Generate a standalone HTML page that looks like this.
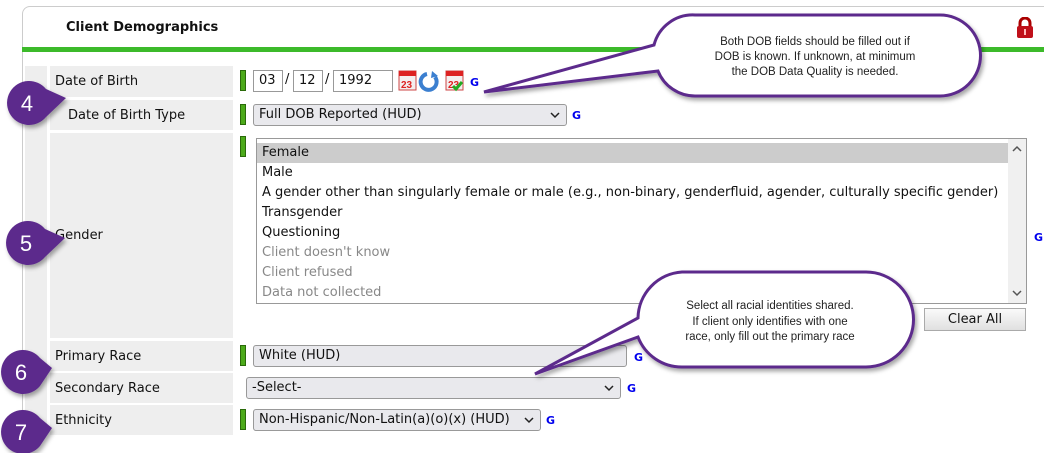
<!DOCTYPE html>
<html style="overflow:hidden;height:453px"><head><style>
*{box-sizing:border-box}
body{margin:0;width:1044px;height:453px;background:#fff;font-family:"DejaVu Sans",Verdana,sans-serif;font-size:13px;color:#111;position:relative;overflow:hidden}
.abs{position:absolute}
.panel{left:22px;top:6px;width:1022px;height:447px;border:1px solid #ccc;border-radius:8px 0 0 0;border-right:none;border-bottom:none}
.green{left:22px;top:47px;width:1022px;height:5px;background:#3cba2a}
.hdr{left:66px;top:20px;font-weight:bold;font-size:13px}
.gc{background:#eee}
.lab{display:flex;align-items:center;padding-left:5px}
.bar{width:6px;height:21px;background:#4caa1a;border:1px solid #2a6a0a}
.inp{height:22px;border:1px solid #999;background:#fff;padding:2px 5px;font-size:13px}
.sel{height:22px;border:1px solid #999;border-radius:3px;background:#e9e9ed;padding:2px 5px;font-size:13px}
.ch{position:absolute;right:6px;top:7px;width:10px;height:7px}
.g{color:#0000ee;font-weight:bold;font-size:11px}
.list div{height:20px;line-height:20px;padding-left:5px;white-space:nowrap}
</style></head><body>
<div class="abs panel"></div>
<div class="abs green"></div>
<div class="abs hdr">Client Demographics</div>
<svg class="abs" style="left:1016px;top:17px" width="18" height="22" viewBox="0 0 18 22"><path d="M4 10V6a5 5 0 0 1 10 0v4" fill="none" stroke="#a00" stroke-width="3"/><rect x="1" y="9" width="16" height="12" rx="2" fill="#c0101a"/><rect x="8" y="12" width="2" height="6" fill="#fbb"/></svg>

<div class="abs gc" style="left:25px;top:66px;width:22px;height:369px"></div>
<div class="abs" style="left:47px;top:66px;width:3px;height:369px;background:#fff"></div>
<div class="abs gc lab" style="left:50px;top:66px;width:183px;height:31px">Date of Birth</div>
<div class="abs gc lab" style="left:50px;top:100px;width:183px;height:30px;padding-left:18px">Date of Birth Type</div>
<div class="abs gc lab" style="left:50px;top:133px;width:183px;height:205px">Gender</div>
<div class="abs gc lab" style="left:50px;top:341px;width:183px;height:30px">Primary Race</div>
<div class="abs gc lab" style="left:50px;top:373px;width:183px;height:30px">Secondary Race</div>
<div class="abs gc lab" style="left:50px;top:405px;width:183px;height:30px">Ethnicity</div>
<div class="abs" style="left:25px;top:97px;width:208px;height:3px;background:#fff"></div>

<div class="abs bar" style="left:240px;top:70px"></div>
<div class="abs inp" style="left:253px;top:70px;width:30px">03</div>
<div class="abs" style="left:285px;top:72px">/</div>
<div class="abs inp" style="left:293px;top:70px;width:30px">12</div>
<div class="abs" style="left:325px;top:72px">/</div>
<div class="abs inp" style="left:333px;top:70px;width:60px">1992</div>
<svg class="abs" style="left:397px;top:68px" width="72" height="26">
<rect x="2" y="3" width="17" height="19" fill="#f4eeee" stroke="#c44"/><rect x="2" y="3" width="17" height="5" fill="#d22"/><text x="4" y="20" font-size="10" font-weight="bold" fill="#d22" font-family="Liberation Sans">23</text>
<path d="M30 6a8 8 0 1 0 8 3" fill="none" stroke="#3b7fd0" stroke-width="4"/><path d="M35 3l6 5-7 2z" fill="#3b7fd0"/>
<rect x="49" y="3" width="17" height="19" fill="#f4eeee" stroke="#c44"/><rect x="49" y="3" width="17" height="5" fill="#d22"/><text x="51" y="20" font-size="10" font-weight="bold" fill="#d22" font-family="Liberation Sans">23</text><path d="M56 18l3 3 6-7" fill="none" stroke="#2a2" stroke-width="3"/>
</svg>
<div class="abs g" style="left:470px;top:76px">G</div>

<div class="abs bar" style="left:240px;top:104px"></div>
<div class="abs sel" style="left:253px;top:104px;width:314px">Full DOB Reported (HUD)<svg class="ch" viewBox="0 0 10 7"><path d="M1 1l4 4 4-4" fill="none" stroke="#222" stroke-width="1.5"/></svg></div>
<div class="abs g" style="left:572px;top:109px">G</div>

<div class="abs bar" style="left:240px;top:136px"></div>
<div class="abs list" style="left:256px;top:138px;width:771px;height:166px;border:1px solid #999;background:#fff;padding-top:4px">
<div style="background:#ccc;margin-right:18px">Female</div><div>Male</div>
<div>A gender other than singularly female or male (e.g., non-binary, genderfluid, agender, culturally specific gender)</div>
<div>Transgender</div><div>Questioning</div>
<div style="color:#888">Client doesn't know</div><div style="color:#888">Client refused</div><div style="color:#888">Data not collected</div>
</div>
<div class="abs" style="left:1008px;top:139px;width:18px;height:164px;background:#f0f0f0">
<svg class="abs" style="left:4px;top:6px" width="10" height="7"><path d="M1 6l4-4 4 4" fill="none" stroke="#555" stroke-width="1.5"/></svg>
<svg class="abs" style="left:4px;top:151px" width="10" height="7"><path d="M1 1l4 4 4-4" fill="none" stroke="#555" stroke-width="1.5"/></svg></div>
<div class="abs g" style="left:1034px;top:231px">G</div>
<div class="abs" style="left:924px;top:308px;width:102px;height:23px;border:1px solid #aaa;background:linear-gradient(#fafafa,#e0e0e0);text-align:center;line-height:21px;font-size:13px">Clear All</div>

<div class="abs bar" style="left:240px;top:345px"></div>
<div class="abs sel" style="left:253px;top:345px;width:374px">White (HUD)</div>
<div class="abs g" style="left:634px;top:351px">G</div>
<div class="abs sel" style="left:246px;top:377px;width:375px">-Select-<svg class="ch" viewBox="0 0 10 7"><path d="M1 1l4 4 4-4" fill="none" stroke="#222" stroke-width="1.5"/></svg></div>
<div class="abs g" style="left:627px;top:382px">G</div>
<div class="abs bar" style="left:240px;top:409px"></div>
<div class="abs sel" style="left:253px;top:409px;width:288px">Non-Hispanic/Non-Latin(a)(o)(x) (HUD)<svg class="ch" viewBox="0 0 10 7"><path d="M1 1l4 4 4-4" fill="none" stroke="#222" stroke-width="1.5"/></svg></div>
<div class="abs g" style="left:546px;top:414px">G</div>

<svg class="abs" style="left:0;top:0" width="1044" height="453">
<defs><filter id="s"><feDropShadow dx="2" dy="3" stdDeviation="2" flood-opacity="0.35"/></filter></defs>
<g filter="url(#s)" fill="#fff" stroke="#5c2a8c" stroke-width="3">
<path d="M695 15H940a40 40 0 0 1 0 81H695a40 40 0 0 1-37-25L484 92L654 45a40 40 0 0 1 41-30z"/>
<path d="M682 272H866a47 47 0 0 1 0 95H682a47 47 0 0 1-44-30L535 374L638 318a47 47 0 0 1 44-46z"/>
</g>
<g font-family="Liberation Sans,Arial,sans-serif" font-size="11.5" fill="#222" text-anchor="middle">
<text x="815" y="45">Both DOB fields should be filled out if</text>
<text x="815" y="60">DOB is known.  If unknown, at minimum</text>
<text x="815" y="75">the DOB Data Quality is needed.</text>
<text x="770" y="309">Select all racial identities shared.</text>
<text x="770" y="325">If client only identifies with one</text>
<text x="770" y="340">race, only fill out the primary race</text>
</g>
<g fill="#5c2a8c" filter="url(#s)">
<path d="M28 81a22 22 0 1 0 18 36L66 98 46 89A22 22 0 0 0 28 81z"/>
<path d="M27 221a22 22 0 1 0 18 36L65 238 45 229A22 22 0 0 0 27 221z"/>
<path d="M22 350a22 22 0 1 0 18 36L52 368 40 358A22 22 0 0 0 22 350z"/>
<path d="M22 410a22 22 0 1 0 18 36L52 428 40 418A22 22 0 0 0 22 410z"/>
</g>
<g fill="#fff" font-family="Liberation Sans,Arial,sans-serif" font-size="22" text-anchor="middle">
<text x="27" y="111">4</text><text x="26" y="251">5</text><text x="21" y="380">6</text><text x="21" y="440">7</text>
</g>
</svg>
</body></html>
